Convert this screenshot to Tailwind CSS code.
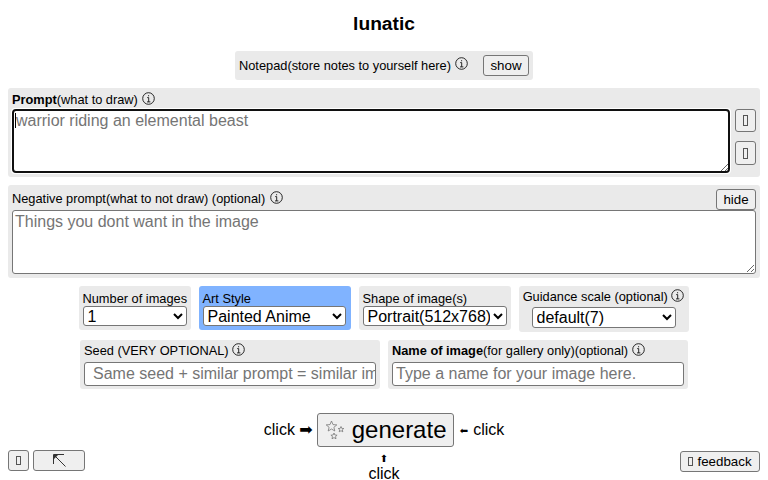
<!DOCTYPE html>
<html lang="en">
<head>
  <meta charset="UTF-8">
  <title>lunatic</title>
  <script src="https://cdn.jsdelivr.net/npm/@tailwindcss/browser@4"></script>
</head>
<body class="h-[480px] overflow-hidden bg-white text-black font-['Liberation_Sans','DejaVu_Sans',sans-serif]">
  <main class="px-2 relative h-[480px]">
    <h1 class="text-center text-[19.2px] leading-[22px] font-bold pt-[13px] h-[51px]">lunatic</h1>

    <!-- notepad -->
    <div class="flex justify-center">
      <div class="w-[298px] h-[29px] bg-[#eaeaea] rounded-[3px] flex items-center pl-1 text-[12.8px] whitespace-nowrap">
        <span>Notepad(store notes to yourself here)</span>
        <svg class="ml-1 -mt-1" width="13" height="13" viewBox="0 0 13 13" fill="none" stroke="#111" stroke-width="0.9"><circle cx="6.5" cy="6.5" r="5.8"/><path d="M5.2 5.6 H6.7 V9.9 M5 9.9 H8.4"/><path d="M6.1 3.2 H7.1 V4.2 H6.1 Z" fill="#111" stroke="none"/></svg>
        <button class="ml-[15px] w-[46px] h-[21px] border border-[#767676] rounded-[3px] bg-[#efefef] text-[13.33px]">show</button>
      </div>
    </div>

    <!-- prompt -->
    <div class="mt-2 h-[89px] bg-[#eaeaea] rounded-[3px] px-1 pt-[3px]">
      <div class="h-[18px] text-[12.8px] leading-[18px]"><b>Prompt</b>(what to draw) <svg class="inline ml-px align-[-1px]" width="13" height="13" viewBox="0 0 13 13" fill="none" stroke="#111" stroke-width="0.9"><circle cx="6.5" cy="6.5" r="5.8"/><path d="M5.2 5.6 H6.7 V9.9 M5 9.9 H8.4"/><path d="M6.1 3.2 H7.1 V4.2 H6.1 Z" fill="#111" stroke="none"/></svg></div>
      <div class="flex">
        <div class="relative">
          <textarea autofocus class="block w-[718px] h-[64px] border border-[#767676] rounded-[3px] bg-white pl-[3px] pr-[2px] py-[2px] text-[16px] leading-[18px] placeholder:text-[#757575]" placeholder="warrior riding an elemental beast"></textarea>
          <span class="absolute left-[3px] top-[4px] w-px h-[15px] bg-black"></span>
        </div>
        <div class="ml-[5px] flex flex-col gap-[9px]">
          <button class="w-[21px] h-[23px] border border-[#767676] rounded-[3px] bg-[#efefef] flex items-center justify-center"><span class="w-[5px] h-[11px] border border-[#555]"></span></button>
          <button class="w-[21px] h-[24px] border border-[#767676] rounded-[3px] bg-[#efefef] flex items-center justify-center"><span class="w-[5px] h-[11px] border border-[#555]"></span></button>
        </div>
      </div>
    </div>

    <!-- negative prompt -->
    <div class="mt-2 h-[93px] bg-[#eaeaea] rounded-[3px] px-1 pt-1">
      <div class="flex justify-between h-[21px] text-[12.8px]">
        <div class="pt-[2px] leading-[16px]">Negative prompt(what to not draw) (optional) <svg class="inline ml-px align-[-1px]" width="13" height="13" viewBox="0 0 13 13" fill="none" stroke="#111" stroke-width="0.9"><circle cx="6.5" cy="6.5" r="5.8"/><path d="M5.2 5.6 H6.7 V9.9 M5 9.9 H8.4"/><path d="M6.1 3.2 H7.1 V4.2 H6.1 Z" fill="#111" stroke="none"/></svg></div>
        <button class="w-[40px] h-[21px] border border-[#767676] rounded-[3px] bg-[#efefef] text-[13.33px]">hide</button>
      </div>
      <textarea class="block w-full h-[64px] border border-[#767676] rounded-[3px] bg-white px-[2px] py-0.5 text-[16px] leading-[18px] placeholder:text-[#757575]" placeholder="Things you dont want in the image"></textarea>
    </div>

    <!-- selects -->
    <div class="mt-2 flex justify-center gap-2 text-[12.8px] leading-[15px] whitespace-nowrap pr-px">
      <div class="w-[112px] h-[44px] bg-[#eaeaea] rounded-[3px] px-1 pt-[5px]">
        <div>Number of images</div>
        <select class="block w-[104px] h-[20px] border border-[#767676] rounded-[3px] bg-white text-[16px]"><option>1</option></select>
      </div>
      <div class="w-[152px] h-[44px] bg-[#80b3ff] rounded-[3px] px-1 pt-[5px]">
        <div>Art Style</div>
        <select class="block w-[143px] h-[20px] border border-[#767676] rounded-[3px] bg-white text-[16px]"><option>Painted Anime</option></select>
      </div>
      <div class="w-[152px] h-[44px] bg-[#eaeaea] rounded-[3px] px-1 pt-[5px]">
        <div>Shape of image(s)</div>
        <select class="block w-[144px] h-[20px] border border-[#767676] rounded-[3px] bg-white text-[16px]"><option>Portrait(512x768)</option></select>
      </div>
      <div class="w-[170px] h-[46px] bg-[#eaeaea] rounded-[3px] pt-[3px] flex flex-col items-center">
        <div class="h-[18px]">Guidance scale (optional) <svg class="inline align-[-1px]" width="13" height="13" viewBox="0 0 13 13" fill="none" stroke="#111" stroke-width="0.9"><circle cx="6.5" cy="6.5" r="5.8"/><path d="M5.2 5.6 H6.7 V9.9 M5 9.9 H8.4"/><path d="M6.1 3.2 H7.1 V4.2 H6.1 Z" fill="#111" stroke="none"/></svg></div>
        <select class="block w-[144px] h-[21px] border border-[#767676] rounded-[3px] bg-white text-[16px]"><option>default(7)</option></select>
      </div>
    </div>

    <!-- seed and name -->
    <div class="mt-2 flex justify-center gap-2 text-[12.8px] leading-[16px] whitespace-nowrap">
      <div class="w-[300px] h-[49px] bg-[#eaeaea] rounded-[3px] px-1 pt-[3px]">
        <div class="h-[19px]">Seed (VERY OPTIONAL) <svg class="inline align-[-1px]" width="13" height="13" viewBox="0 0 13 13" fill="none" stroke="#111" stroke-width="0.9"><circle cx="6.5" cy="6.5" r="5.8"/><path d="M5.2 5.6 H6.7 V9.9 M5 9.9 H8.4"/><path d="M6.1 3.2 H7.1 V4.2 H6.1 Z" fill="#111" stroke="none"/></svg></div>
        <input class="block w-[292px] h-[24px] border border-[#767676] rounded-[3px] bg-white pl-2 pr-0 text-[16px] placeholder:text-[#757575]" placeholder="Same seed + similar prompt = similar image">
      </div>
      <div class="w-[300px] h-[49px] bg-[#eaeaea] rounded-[3px] px-1 pt-[3px]">
        <div class="h-[19px]"><b>Name of image</b>(for gallery only)(optional) <svg class="inline align-[-1px]" width="13" height="13" viewBox="0 0 13 13" fill="none" stroke="#111" stroke-width="0.9"><circle cx="6.5" cy="6.5" r="5.8"/><path d="M5.2 5.6 H6.7 V9.9 M5 9.9 H8.4"/><path d="M6.1 3.2 H7.1 V4.2 H6.1 Z" fill="#111" stroke="none"/></svg></div>
        <input class="block w-[292px] h-[24px] border border-[#767676] rounded-[3px] bg-white px-[3px] text-[16px] placeholder:text-[#757575]" placeholder="Type a name for your image here.">
      </div>
    </div>

    <!-- generate -->
    <div class="mt-[24px] flex justify-center items-center text-[16px] h-[34px] whitespace-nowrap">
      <span>click ➡</span>
      <button class="ml-1 mr-[6px] w-[137px] h-[34px] border border-[#767676] rounded-[3px] bg-[#efefef] text-[24px] leading-none flex items-center pl-[7px] gap-[7px]">
        <svg width="20" height="20" viewBox="0 0 20 20" fill="none" stroke="#777" stroke-width="0.8">
          <path d="M6.5 1 L8 4.6 L11.8 4.9 L8.9 7.3 L9.8 11 L6.5 9 L3.2 11 L4.1 7.3 L1.2 4.9 L5 4.6 Z"/>
          <path d="M16 6.5 L16.8 8.4 L18.8 8.5 L17.3 9.8 L17.8 11.8 L16 10.7 L14.2 11.8 L14.7 9.8 L13.2 8.5 L15.2 8.4 Z"/>
          <path d="M9 13 L9.9 15 L12.1 15.2 L10.5 16.6 L11 18.8 L9 17.6 L7 18.8 L7.5 16.6 L5.9 15.2 L8.1 15 Z"/>
        </svg>
        <span>generate</span>
      </button>
      <span class="text-[10px]">⬅</span>
      <span class="ml-[5px]">click</span>
    </div>
    <div class="flex flex-col items-center text-[16px] leading-[14px] mt-[3px]">
      <span class="text-[10px] leading-[17px]">⬆</span>
      <span>click</span>
    </div>

    <!-- bottom buttons, stuck over the page's corners -->
    <div class="absolute left-2 top-[450px] flex gap-1">
      <button class="w-[21px] h-[21px] border border-[#767676] rounded-[3px] bg-[#efefef] flex items-center justify-center"><span class="w-[5px] h-[9px] border border-[#555]"></span></button>
      <button class="w-[52px] h-[21px] border border-[#767676] rounded-[3px] bg-[#efefef] flex items-center justify-center">
        <svg width="13" height="13" viewBox="0 0 13 13" fill="none" stroke="#333" stroke-width="1"><path d="M0.5 0.5 H11 M0.5 0.5 V10 M2.5 2.5 L12.5 12.5"/><path d="M1 1 H5 L1 5 Z" fill="#333" stroke="none"/></svg>
      </button>
    </div>
    <button class="absolute right-2 top-[451px] w-[80px] h-[21px] border border-[#767676] rounded-[3px] bg-[#efefef] text-[13.33px] flex items-center justify-center gap-1"><span class="w-[5px] h-[9px] border border-[#555]"></span>feedback</button>
  </main>
</body>
</html>
